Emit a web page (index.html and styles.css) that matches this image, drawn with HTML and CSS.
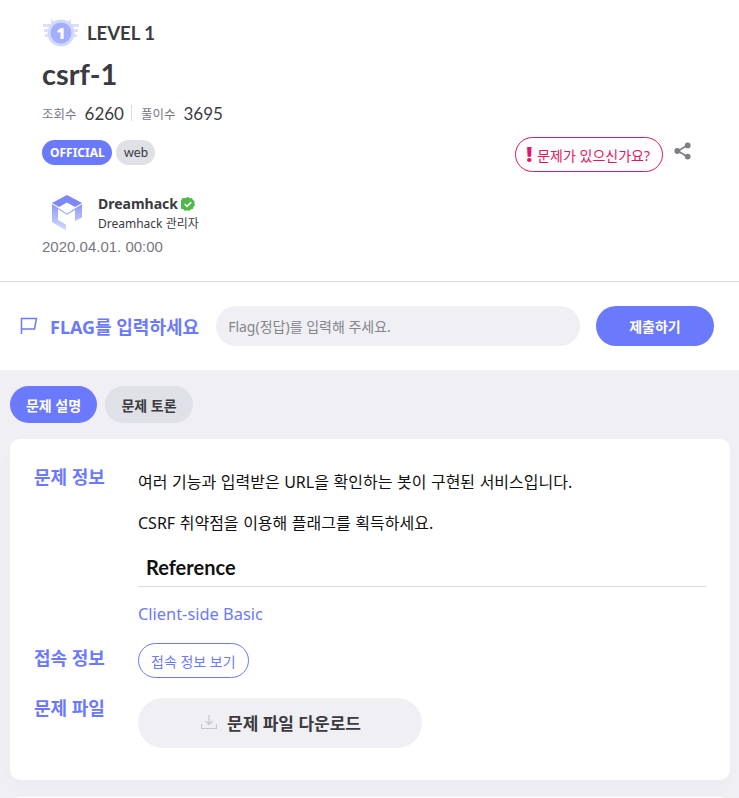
FILE: index.html
```html
<!DOCTYPE html>
<html lang="ko">
<head>
  <meta charset="UTF-8" />
  <meta name="viewport" content="width=device-width, initial-scale=1.0" />
  <title>csrf-1 | Dreamhack</title>
  <link rel="stylesheet" href="styles.css">
</head>

<body>
  <header class="challenge-head">
    <div class="level">
      <svg class="level-badge" width="38" height="30" viewBox="0 0 38 30">
        <g fill="#dcdffc">
          <rect x="1" y="6" width="8" height="3" />
          <rect x="2" y="11" width="7" height="3" />
          <rect x="3" y="16" width="6" height="3" />
          <rect x="29" y="6" width="8" height="3" />
          <rect x="29" y="11" width="7" height="3" />
          <rect x="29" y="16" width="6" height="3" />
          <path d="M9 1l5 4h10l5-4v12H9z" />
        </g>
        <circle cx="19" cy="15" r="13.500" fill="#d3d8fd" />
        <circle cx="19" cy="15" r="10.500" fill="#a3aefc" />
        <text class="level-digit" x="19" y="20.500" text-anchor="middle">1</text>
      </svg>
      <span class="level-name">LEVEL 1</span>
    </div>
    <h1 class="challenge-title">csrf-1</h1>
    <div class="stats">
      <span class="stat-label">조회수</span>
      <span class="stat-value">6260</span>
      <span class="stat-sep"></span>
      <span class="stat-label">풀이수</span>
      <span class="stat-value">3695</span>
    </div>
    <div class="tag-row">
      <div class="tags">
        <span class="tag tag-official">OFFICIAL</span>
        <span class="tag tag-web">web</span>
      </div>
      <div class="report">
        <button class="report-button"><span class="report-mark">!</span>문제가 있으신가요?</button>
        <svg class="share-icon" width="17" height="18" viewBox="0 0 17 18">
          <path d="M13 3.500L4 9l9 5.500" fill="none" stroke="#7e7e86" stroke-width="1.600" />
          <circle cx="13.700" cy="3.400" r="2.900" fill="#7e7e86" />
          <circle cx="3.300" cy="9" r="2.900" fill="#7e7e86" />
          <circle cx="13.700" cy="14.600" r="2.900" fill="#7e7e86" />
        </svg>
      </div>
    </div>
    <div class="author">
      <svg class="author-logo" width="36" height="38" viewBox="0 0 36 38">
        <defs>
          <linearGradient id="logo-left" x1="0" y1="0" x2="0" y2="1">
            <stop offset="0" stop-color="#8d97f8" />
            <stop offset="1" stop-color="#d2dcff" />
          </linearGradient>
        </defs>
        <path d="M18 1L33 9 26 13 18 8.500 10 13 3 9z" fill="#7c88f6" />
        <path d="M3 10v18l14 8.500v-6L9 26V15l9 6 8-5v11l7-3.500V10L18 19.500z" fill="url(#logo-left)" />
      </svg>
      <div class="author-text">
        <div class="author-name">Dreamhack
          <svg class="verified" width="14" height="14" viewBox="0 0 15 15">
            <path d="M7.500 0l2 1.300 2.300-.2.9 2.100 2 1.200-.5 2.300.8 2.200-1.700 1.600-.5 2.300-2.300.4-1.600 1.700-2.400-.7-2.300.7-1.600-1.700-2.300-.4-.5-2.300-1.400-1.600.6-2.200-.5-2.300 2-1.200.9-2.100 2.300.2z" fill="#4fb846" />
            <path d="M4 7.500l2.500 2.500L11 5.500" fill="none" stroke="#fff" stroke-width="1.600" />
          </svg>
        </div>
        <div class="author-role">Dreamhack 관리자</div>
      </div>
    </div>
    <div class="created">2020.04.01. 00:00</div>
  </header>

  <section class="flag-bar">
    <svg class="flag-icon" width="18" height="18" viewBox="0 0 18 18">
      <path d="M1.500 17V1.500h15l-2 10.500h-13" fill="none" stroke="#6b79fd" stroke-width="1.500" />
    </svg>
    <span class="flag-label">FLAG를 입력하세요</span>
    <input class="flag-input" type="text" placeholder="Flag(정답)를 입력해 주세요." />
    <button class="flag-submit">제출하기</button>
  </section>

  <main class="challenge-body">
    <div class="tabs">
      <button class="tab tab-active">문제 설명</button>
      <button class="tab">문제 토론</button>
    </div>

    <div class="card">
      <div class="info-row info-row-desc">
        <h3 class="info-title">문제 정보</h3>
        <div class="info-content description">
          <p>여러 기능과 입력받은 URL을 확인하는 봇이 구현된 서비스입니다.</p>
          <p>CSRF 취약점을 이용해 플래그를 획득하세요.</p>
          <h4 class="ref-title">Reference</h4>
          <a class="ref-link" href="#">Client-side Basic</a>
        </div>
      </div>
      <div class="info-row info-row-access">
        <h3 class="info-title">접속 정보</h3>
        <div class="info-content">
          <button class="access-button">접속 정보 보기</button>
        </div>
      </div>
      <div class="info-row info-row-file">
        <h3 class="info-title">문제 파일</h3>
        <div class="info-content">
          <button class="download-button">
            <svg width="16" height="14" viewBox="0 0 16 14">
              <path d="M8 0v9M4.500 6L8 9.500 11.500 6M.5 9v4.500h15V9" fill="none" stroke="#c6c6cc" stroke-width="1.200" />
            </svg>
            문제 파일 다운로드
          </button>
        </div>
      </div>
    </div>

    <div class="card card-next"></div>
  </main>
</body>
</html>
```

FILE: styles.css
```css
:root {
  --primary: #6b79fd;
  --text: #3a3a40;
  --muted: #77777f;
  --surface: #efeff4;
  --pill: #e0e0e7;
  --pink: #e3165f;
}

* {
  box-sizing: border-box;
}

html,
body {
  height: 798px;
  overflow: hidden;
}

body {
  margin: 0;
  background: #fff;
  color: var(--text);
  font-family: "Noto Sans", "Noto Sans CJK KR", sans-serif;
}

button,
input {
  font-family: inherit;
}

button {
  border: none;
  cursor: pointer;
}

/* header */
.challenge-head {
  height: 282px;
  padding: 17px 48px 0 42px;
  border-bottom: 1px solid #dcdce0;
}

.level {
  display: flex;
  align-items: center;
  gap: 7px;
  height: 32px;
}

.level-digit {
  fill: #fff;
  font-size: 15px;
  font-weight: 900;
}

.level-name {
  font-family: Lato, "Noto Sans CJK KR", sans-serif;
  font-size: 18.500px;
  font-weight: 700;
}

.challenge-title {
  margin: 3px 0 0;
  font-family: Lato, "Noto Sans CJK KR", sans-serif;
  font-size: 29px;
  line-height: 44px;
  font-weight: 700;
}

.stats {
  display: flex;
  align-items: center;
  height: 24px;
  margin-top: 5px;
}

.stat-label {
  font-size: 12.500px;
  color: var(--muted);
}

.stat-value {
  margin-left: 8px;
  font-family: Lato, sans-serif;
  font-size: 17px;
}

.stat-sep {
  width: 1px;
  height: 16px;
  margin: 0 9px 0 7px;
  background: #dcdce0;
}

.tag-row {
  display: flex;
  justify-content: space-between;
  align-items: flex-start;
  margin-top: 12px;
}

.tags {
  display: flex;
  gap: 4px;
  margin-top: 3px;
}

.tag {
  height: 25px;
  line-height: 25px;
  border-radius: 13px;
  font-size: 13px;
}

.tag-official {
  padding: 0 7px 0 8px;
  background: var(--primary);
  color: #fff;
  font-weight: 700;
  font-size: 12px;
}

.tag-web {
  padding: 0 7px 0 8px;
  background: var(--pill);
  font-family: Lato, sans-serif;
}

.report {
  display: flex;
  align-items: flex-start;
  gap: 11px;
}

.report-button {
  display: flex;
  align-items: center;
  height: 35px;
  padding: 0 12px 0 10px;
  background: #fff;
  border: 1px solid var(--pink);
  border-radius: 18px;
  color: var(--pink);
  font-size: 14px;
}

.report-mark {
  margin-right: 5px;
  font-weight: 900;
  font-size: 21px;
  line-height: 1;
}

.share-icon {
  margin-top: 5px;
}

.author {
  display: flex;
  align-items: center;
  gap: 13px;
  margin-top: 22px;
  padding-left: 7px;
}

.author-logo {
  margin-top: -3px;
}

.author-name {
  display: flex;
  align-items: center;
  gap: 3px;
  font-size: 14px;
  font-weight: 700;
  line-height: 20px;
}

.author-role {
  font-size: 12px;
  line-height: 20px;
}

.created {
  margin-top: 4px;
  font-family: "Liberation Sans", sans-serif;
  font-size: 15px;
  color: var(--muted);
}

/* flag */
.flag-bar {
  display: flex;
  align-items: center;
  height: 88px;
  padding: 0 25px 0 20px;
}

.flag-icon {
  flex: none;
  margin-right: 12px;
}

.flag-label {
  margin-right: 17px;
  color: var(--primary);
  font-size: 18px;
  font-weight: 700;
  white-space: nowrap;
}

.flag-input {
  flex: 1;
  height: 40px;
  padding: 0 12px;
  background: var(--surface);
  border: none;
  border-radius: 20px;
  font-size: 14px;
}

.flag-input::placeholder {
  color: #85858d;
}

.flag-submit {
  width: 118px;
  height: 40px;
  margin-left: 16px;
  background: var(--primary);
  border-radius: 20px;
  color: #fff;
  font-size: 14px;
  font-weight: 700;
}

/* body */
.challenge-body {
  height: 428px;
  padding: 16px 9px 0 10px;
  background: var(--surface);
}

.tabs {
  display: flex;
  gap: 8px;
  margin-bottom: 16px;
}

.tab {
  width: 88px;
  height: 37px;
  padding: 0;
  background: var(--pill);
  border-radius: 19px;
  color: var(--text);
  font-size: 14px;
  font-weight: 700;
}

.tab-active {
  width: 87px;
  background: var(--primary);
  color: #fff;
}

.card {
  height: 341px;
  padding: 24px 24px 0;
  background: #fff;
  border-radius: 10px;
  box-shadow: 0 8px 16px rgba(0, 0, 0, 0.02);
}

.card-next {
  height: 40px;
  margin-top: 17px;
}

.info-row {
  display: flex;
}

.info-row-desc {
  margin-bottom: 17px;
}

.info-row-access {
  margin-bottom: 20px;
}

.info-title {
  flex: none;
  width: 104px;
  margin: 0;
  color: var(--primary);
  font-size: 18px;
  font-weight: 700;
  line-height: 28px;
}

.info-row-access .info-title {
  line-height: 30px;
}

.info-row-file .info-title {
  line-height: 20px;
}

.info-content {
  flex: 1;
}

.description p {
  margin: 0 0 17px;
  padding-top: 7px;
  color: #111;
  font-size: 16px;
  line-height: 24px;
  word-spacing: 0.400px;
}

.description p + p {
  padding-top: 0;
}

.ref-title {
  margin: 0;
  padding: 0 8px 4px;
  border-bottom: 1px solid #dcdce0;
  color: #111;
  font-family: Lato, sans-serif;
  font-size: 20px;
  font-weight: 700;
  line-height: 30px;
}

.ref-link {
  display: block;
  margin-top: 15px;
  color: var(--primary);
  font-size: 16.400px;
  line-height: 24px;
  text-decoration: none;
}

.access-button {
  height: 35px;
  padding: 0 12px;
  background: #fff;
  border: 1px solid var(--primary);
  border-radius: 18px;
  color: var(--primary);
  font-size: 14px;
}

.download-button {
  display: flex;
  justify-content: center;
  align-items: center;
  gap: 10px;
  width: 284px;
  height: 50px;
  padding: 0 0 2px 2px;
  background: var(--surface);
  border-radius: 25px;
  color: var(--text);
  font-size: 17px;
  font-weight: 700;
}
```
